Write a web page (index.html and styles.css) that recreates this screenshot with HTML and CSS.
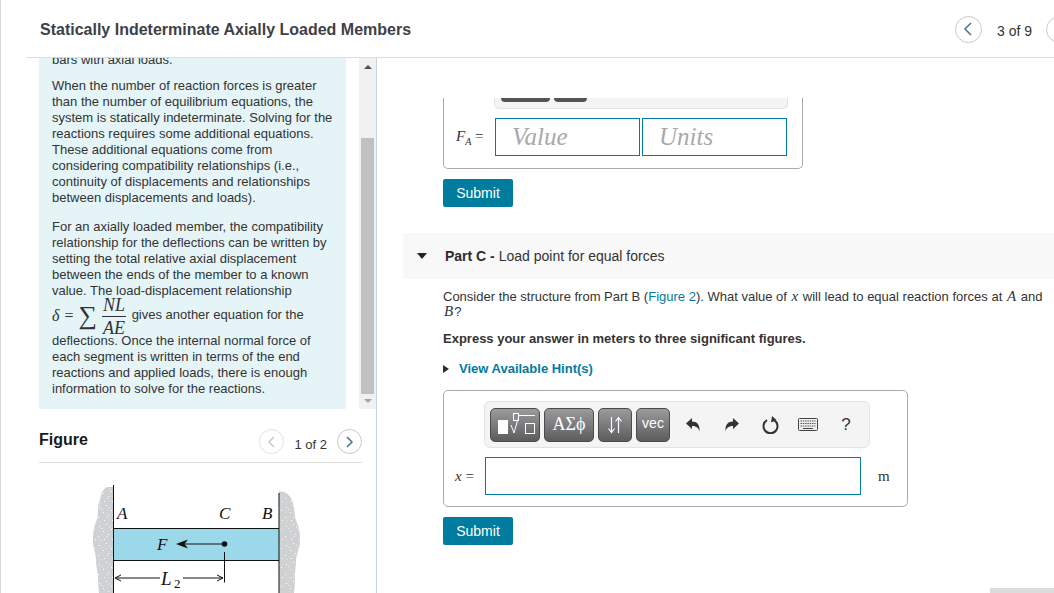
FILE: index.html
```html
<!DOCTYPE html>
<html lang="en">
<head>
  <meta charset="UTF-8">
  <title>Statically Indeterminate Axially Loaded Members</title>
  <link rel="stylesheet" href="styles.css">
</head>
<body>
  <div class="page">
    <header class="top-bar">
      <h1>Statically Indeterminate Axially Loaded Members</h1>
      <div class="pager">
        <button class="round"><svg width="10" height="14" viewBox="0 0 10 14"><path d="M8 1 2 7l6 6" fill="none" stroke="#4d7089" stroke-width="1.5"/></svg></button>
        <span class="pager-text">3 of 9</span>
        <button class="round"></button>
      </div>
    </header>

    <div class="columns">
      <aside class="left">
        <div class="intro-wrap">
          <div class="intro">
            <div class="intro-inner">
              <p class="first">bars with axial loads.</p>
              <p>When the number of reaction forces is greater than the number of equilibrium equations, the system is statically indeterminate. Solving for the reactions requires some additional equations. These additional equations come from considering compatibility relationships (i.e., continuity of displacements and relationships between displacements and loads).</p>
              <p>For an axially loaded member, the compatibility relationship for the deflections can be written by setting the total relative axial displacement between the ends of the member to a known value. The load-displacement relationship <span class="formula"><i>δ</i><span class="eq">=</span><span class="sum">∑</span><span class="frac"><i class="numer">NL</i><i class="denom">AE</i></span></span> gives another equation for the deflections. Once the internal normal force of each segment is written in terms of the end reactions and applied loads, there is enough information to solve for the reactions.</p>
            </div>
          </div>
          <div class="scrollbar">
            <span class="arrow-up"></span>
            <span class="thumb"></span>
            <span class="arrow-down"></span>
          </div>
        </div>

        <div class="figure-head">
          <h2>Figure</h2>
          <div class="fig-pager">
            <button class="round small off"><svg width="9" height="12" viewBox="0 0 9 12"><path d="M7 1 2 6l5 5" fill="none" stroke="#c8c8c8" stroke-width="1.5"/></svg></button>
            <span class="fig-text">1 of 2</span>
            <button class="round small"><svg width="9" height="12" viewBox="0 0 9 12"><path d="m2 1 5 5-5 5" fill="none" stroke="#4d6f86" stroke-width="1.5"/></svg></button>
          </div>
        </div>

        <svg class="figure" width="230" height="108" viewBox="0 0 230 108">
          <defs>
            <pattern id="rock" width="17" height="19" patternUnits="userSpaceOnUse">
              <rect width="17" height="19" fill="#d0d1d3"/>
              <g fill="#fff">
                <rect x="2" y="3" width="1" height="1"/><rect x="9" y="1" width="1" height="1"/><rect x="14" y="6" width="1" height="1"/>
                <rect x="6" y="8" width="1" height="1"/><rect x="11" y="11" width="1" height="1"/><rect x="1" y="13" width="1" height="1"/>
                <rect x="7" y="16" width="1" height="1"/><rect x="15" y="16" width="1" height="1"/>
              </g>
              <g fill="#e4e5e6">
                <rect x="4" y="5" width="2" height="1"/><rect x="12" y="3" width="1" height="2"/><rect x="9" y="13" width="2" height="1"/><rect x="3" y="17" width="1" height="1"/>
              </g>
            </pattern>
          </defs>
          <path d="M27 2C21 5 21 12 19 18 17 25 19 30 16 37 13 44 13 50 13 57 13 64 16 68 16 75 16 84 19 90 18 96 18 101 19 105 19 108H33V2Z" fill="url(#rock)"/>
          <path d="M199 6C205 6 211 10 213 18 215 25 214 31 217 38 220 45 220 50 220 57 220 64 216 69 216 76 216 84 214 90 215 96 215 101 214 105 214 108H199Z" fill="url(#rock)"/>
          <rect x="33" y="43" width="166" height="32" fill="#9bd8ea"/>
          <path d="M33.500 0V108M199 8V108" stroke="#111" stroke-width="1" fill="none"/>
          <path d="M33 43.500H199M33 75.500H199" stroke="#111" stroke-width="1" fill="none"/>
          <path d="M104 59H144.500M144.500 67V97.500M36 93H80M103 93H143" stroke="#111" stroke-width="1" fill="none"/>
          <path d="M96 59 108 54.500 104.500 59 108 63.500Z" fill="#111"/>
          <circle cx="144.500" cy="59" r="2.800" fill="#111"/>
          <path d="M41 90 35 93 41 96M137 90 143 93 137 96" fill="none" stroke="#111"/>
          <g class="fig-label">
            <text x="37" y="34">A</text>
            <text x="139" y="34">C</text>
            <text x="182" y="34">B</text>
            <text x="77" y="65">F</text>
            <text class="fig-l" x="81" y="100">L</text>
          </g>
          <text class="fig-sub" x="94" y="103">2</text>
        </svg>
      </aside>

      <main class="right">
        <div class="clip">
          <section class="answer-box upper">
            <div class="tools-stub">
              <span class="stub wide"></span>
              <span class="stub"></span>
            </div>
            <div class="answer-row pair">
              <span class="var"><i>F<sub>A</sub></i> =</span>
              <span class="field placeholder">Value</span>
              <span class="field placeholder">Units</span>
            </div>
          </section>
          <button class="submit">Submit</button>

          <div class="part-head">
            <span class="part-arrow"></span>
            <span><b>Part C -</b> Load point for equal forces</span>
          </div>

          <div class="part-body">
            <p class="question">Consider the structure from Part B (<a href="#">Figure 2</a>). What value of <i class="m">x</i> will lead to equal reaction forces at <i class="m">A</i> and <i class="m">B</i>?</p>
            <p class="express">Express your answer in meters to three significant figures.</p>
            <p class="hint"><span class="hint-arrow"></span><a href="#">View Available Hint(s)</a></p>

            <section class="answer-box lower">
              <div class="toolbar">
                <button class="tool t-tmpl">
                  <svg width="44" height="30" viewBox="0 0 44 30">
                    <rect x="5" y="10" width="10" height="14" fill="#fff"/>
                    <rect x="20.500" y="3.500" width="5" height="7" fill="none" stroke="#fff"/>
                    <path d="M18 15l3 8 5-17.500h16" fill="none" stroke="#fff"/>
                    <rect x="32.500" y="13.500" width="9" height="10" fill="none" stroke="#fff"/>
                  </svg>
                </button>
                <button class="tool t-greek">ΑΣϕ</button>
                <button class="tool t-arrows">
                  <svg width="16" height="18" viewBox="0 0 16 18"><path d="M4.500 1V16M1.500 12.500 4.500 16.500 7.500 12.500M11.500 17V2M8.500 5.500 11.500 1.500 14.500 5.500" fill="none" stroke="#fff" stroke-width="1.200"/></svg>
                </button>
                <button class="tool t-vec">vec</button>
                <span class="icon-tool">
                  <svg width="14" height="14" viewBox="0 0 14 14"><path d="M0 5.500 6 0V3.500C11 3.500 14 6.500 13.500 13.500 12.500 9.500 10 8 6 8V11Z" fill="#333"/></svg>
                </span>
                <span class="icon-tool redo">
                  <svg width="14" height="14" viewBox="0 0 14 14"><path d="M14 5.500 8 0V3.500C3 3.500 0 6.500.5 13.500 1.500 9.500 4 8 8 8V11Z" fill="#333"/></svg>
                </span>
                <span class="icon-tool">
                  <svg width="17" height="18" viewBox="0 0 17 18"><path d="M5 4.200A7 7 0 1 0 12 4.200" fill="none" stroke="#333" stroke-width="2"/><path d="M10 0 14.500 4 9 6.500Z" fill="#333"/></svg>
                </span>
                <span class="icon-tool">
                  <svg width="20" height="13" viewBox="0 0 20 13"><rect x=".5" y=".5" width="19" height="12" rx="1" fill="#eee" stroke="#444"/><path d="M2.500 3H17.500M2.500 5.500H17.500M2.500 8H17.500" stroke="#555" stroke-dasharray="1.500 .8"/><path d="M5 10.500H15" stroke="#444"/></svg>
                </span>
                <span class="icon-tool help">?</span>
              </div>
              <div class="answer-row">
                <span class="var var-x"><i>x</i> =</span>
                <span class="field long"></span>
                <span class="unit">m</span>
              </div>
            </section>
            <button class="submit">Submit</button>
          </div>
        </div>
        <span class="page-thumb"></span>
      </main>
    </div>
  </div>
</body>
</html>
```

FILE: styles.css
```css
* {
  box-sizing: border-box;
}

html, body {
  margin: 0;
  padding: 0;
  height: 100%;
  overflow: hidden;
  background: #fff;
}

body {
  font-family: "Liberation Sans", Arial, sans-serif;
  color: #333;
}

p {
  margin: 0;
}

a {
  color: #007c9f;
  text-decoration: none;
}

button {
  font-family: inherit;
  padding: 0;
}

.page {
  width: 1054px;
  height: 593px;
  border-left: 1px solid #d9d9d9;
  display: flex;
  flex-direction: column;
  overflow: hidden;
}

/* Header */
.top-bar {
  flex: none;
  height: 58px;
  margin-left: 25px;
  padding-left: 14px;
  padding-top: 3px;
  border-bottom: 1px solid #dedede;
  display: flex;
  align-items: center;
  justify-content: space-between;
}

.top-bar h1 {
  margin: 0;
  font-size: 16px;
  font-weight: bold;
  color: #3f3f46;
}

.pager {
  display: flex;
  align-items: center;
  margin-right: -19px;
  margin-bottom: 2px;
}

.pager-text {
  font-size: 14px;
  margin: 0 14px 0 15px;
  padding-top: 4px;
}

.round {
  width: 27px;
  height: 27px;
  border: 1px solid #c9c9c9;
  border-radius: 50%;
  background: #fff;
  display: flex;
  align-items: center;
  justify-content: center;
}

.round.small {
  width: 25px;
  height: 25px;
}

.round.off {
  border-color: #e2e2e2;
}

.columns {
  flex: 1;
  min-height: 0;
  display: flex;
}

/* Left column */
.left {
  flex: none;
  width: 376px;
  border-right: 1px solid #c6d6e0;
  padding-left: 38px;
  overflow: hidden;
}

.intro-wrap {
  display: flex;
  height: 351px;
}

.intro {
  width: 307px;
  background: #e5f5f7;
  overflow: hidden;
}

.intro-inner {
  margin-top: -6px;
  padding: 0 13px;
  font-size: 13px;
  line-height: 16px;
}

.intro-inner p {
  margin-bottom: 13px;
}

.intro-inner .first {
  margin-bottom: 10px;
}

.formula {
  display: inline-flex;
  align-items: center;
  vertical-align: middle;
  height: 34px;
  margin-right: 2px;
  font-family: "Liberation Serif", serif;
  font-size: 16px;
}

.eq {
  margin: 0 5px 0 5px;
}

.sum {
  font-size: 26px;
  margin-right: 5px;
}

.frac {
  display: inline-flex;
  flex-direction: column;
  align-items: center;
  margin-top: 1px;
  font-size: 18px;
  line-height: 16px;
}

.numer {
  padding-bottom: 3px;
}

.denom {
  border-top: 1px solid #333;
  padding: 3px 1px 0;
}

.scrollbar {
  width: 17px;
  margin-left: 13px;
  background: #f1f1f1;
  display: flex;
  flex-direction: column;
  align-items: center;
}

.arrow-up,
.arrow-down {
  width: 0;
  height: 0;
  border-left: 4px solid transparent;
  border-right: 4px solid transparent;
}

.arrow-up {
  margin-top: 7px;
  border-bottom: 4px solid #505050;
}

.arrow-down {
  margin-top: 5px;
  border-top: 4px solid #a3a3a3;
}

.thumb {
  width: 13px;
  height: 256px;
  margin-top: 69px;
  background: #c1c1c1;
}

.figure-head {
  width: 323px;
  height: 54px;
  padding-top: 20px;
  border-bottom: 1px solid #dedede;
  display: flex;
  justify-content: space-between;
  align-items: flex-start;
}

.figure-head h2 {
  margin: 2px 0 0;
  font-size: 16px;
  line-height: 18px;
  color: #1a1a1a;
}

.fig-pager {
  display: flex;
  align-items: center;
}

.fig-text {
  font-size: 13px;
  margin: 0 10px;
  padding-top: 5px;
}

.figure {
  display: block;
  margin: 22px 0 0 41px;
}

.fig-label text {
  font-family: "Liberation Serif", serif;
  font-style: italic;
  font-size: 17px;
  fill: #111;
}

.fig-label .fig-l {
  font-size: 19px;
}

.fig-sub {
  font-family: "Liberation Serif", serif;
  font-size: 13px;
  fill: #111;
}

/* Right column */
.right {
  flex: 1;
  min-width: 0;
  position: relative;
  overflow: hidden;
  padding-top: 40px;
}

.clip {
  height: 495px;
  overflow: hidden;
  padding-left: 66px;
}

.answer-box {
  border: 1px solid #aaa;
  border-radius: 5px;
  background: #fff;
}

.answer-box.upper {
  width: 360px;
  height: 71px;
  border-top: 0;
  border-top-left-radius: 0;
  border-top-right-radius: 0;
}

.tools-stub {
  margin-left: 50px;
  width: 294px;
  height: 11px;
  background: #f4f4f4;
  border: 1px solid #e2e2e2;
  border-top: 0;
  border-radius: 0 0 5px 5px;
  padding-left: 6px;
  display: flex;
  gap: 4px;
}

.stub {
  width: 33px;
  height: 4px;
  background: #555;
  border-radius: 0 0 4px 4px;
}

.stub.wide {
  width: 49px;
}

.answer-row {
  display: flex;
  align-items: center;
}

.answer-row.pair {
  margin-top: 9px;
  gap: 2px;
}

.var {
  font-family: "Liberation Serif", serif;
  font-size: 15px;
  color: #333;
  width: 49px;
  padding-left: 12px;
  white-space: nowrap;
}

.var sub {
  font-size: 10px;
}

.field {
  display: block;
  height: 38px;
  border: 1px solid #007c9f;
  background: #fff;
}

.placeholder {
  width: 145px;
  padding-left: 16px;
  font-family: "Liberation Serif", serif;
  font-style: italic;
  font-size: 25px;
  line-height: 35px;
  color: #a9a9a9;
}

.submit {
  display: block;
  width: 70px;
  height: 28px;
  margin-top: 10px;
  border: 0;
  border-radius: 2px;
  background: #007c9f;
  color: #fff;
  font-size: 14px;
}

.part-head {
  height: 46px;
  margin: 26px 0 0 -40px;
  padding-left: 14px;
  background: #f8f8f8;
  display: flex;
  align-items: center;
  font-size: 14px;
  color: #333;
}

.part-head b {
  color: #2d2d2d;
}

.part-arrow {
  width: 0;
  height: 0;
  margin-right: 18px;
  border-left: 5px solid transparent;
  border-right: 5px solid transparent;
  border-top: 6px solid #222;
}

.part-body {
  padding-top: 10px;
  font-size: 13px;
}

.question {
  line-height: 15px;
  width: 608px;
}

.m {
  font-family: "Liberation Serif", serif;
  font-size: 15px;
  line-height: 1;
  margin: 0 1px;
}

.express {
  margin-top: 12px;
  line-height: 16px;
  font-weight: bold;
}

.hint {
  margin-top: 14px;
  line-height: 16px;
  font-weight: bold;
  display: flex;
  align-items: center;
}

.hint-arrow {
  width: 0;
  height: 0;
  margin-right: 10px;
  border-top: 4px solid transparent;
  border-bottom: 4px solid transparent;
  border-left: 6px solid #222f3a;
}

.answer-box.lower {
  width: 465px;
  height: 117px;
  margin-top: 13px;
}

.toolbar {
  width: 386px;
  height: 47px;
  margin: 10px 0 0 40px;
  padding-left: 5px;
  background: #f4f4f4;
  border: 1px solid #e2e2e2;
  border-radius: 6px;
  display: flex;
  align-items: center;
}

.tool {
  height: 34px;
  margin-right: 4px;
  border: 1px solid #4b4b4b;
  border-radius: 5px;
  background: linear-gradient(#9b9b9f, #5c5c5c);
  color: #fff;
  display: flex;
  align-items: center;
  justify-content: center;
}

.t-tmpl,
.t-greek {
  width: 50px;
}

.t-greek {
  font-family: "Liberation Serif", serif;
  font-size: 18px;
}

.t-arrows,
.t-vec {
  width: 34px;
}

.t-vec {
  font-size: 14px;
  padding-bottom: 3px;
}

.icon-tool {
  width: 38px;
  display: flex;
  justify-content: center;
  color: #333;
}

.redo {
  margin-left: 1px;
}

.help {
  font-size: 17px;
}

.lower .answer-row {
  margin-top: 9px;
}

.var-x {
  width: 41px;
  padding-left: 11px;
}

.long {
  width: 376px;
}

.unit {
  margin-left: 17px;
  font-family: "Liberation Serif", serif;
  font-size: 15px;
}

.page-thumb {
  position: absolute;
  right: 0;
  bottom: 0;
  width: 64px;
  height: 5px;
  background: #dcdcdc;
}
```
